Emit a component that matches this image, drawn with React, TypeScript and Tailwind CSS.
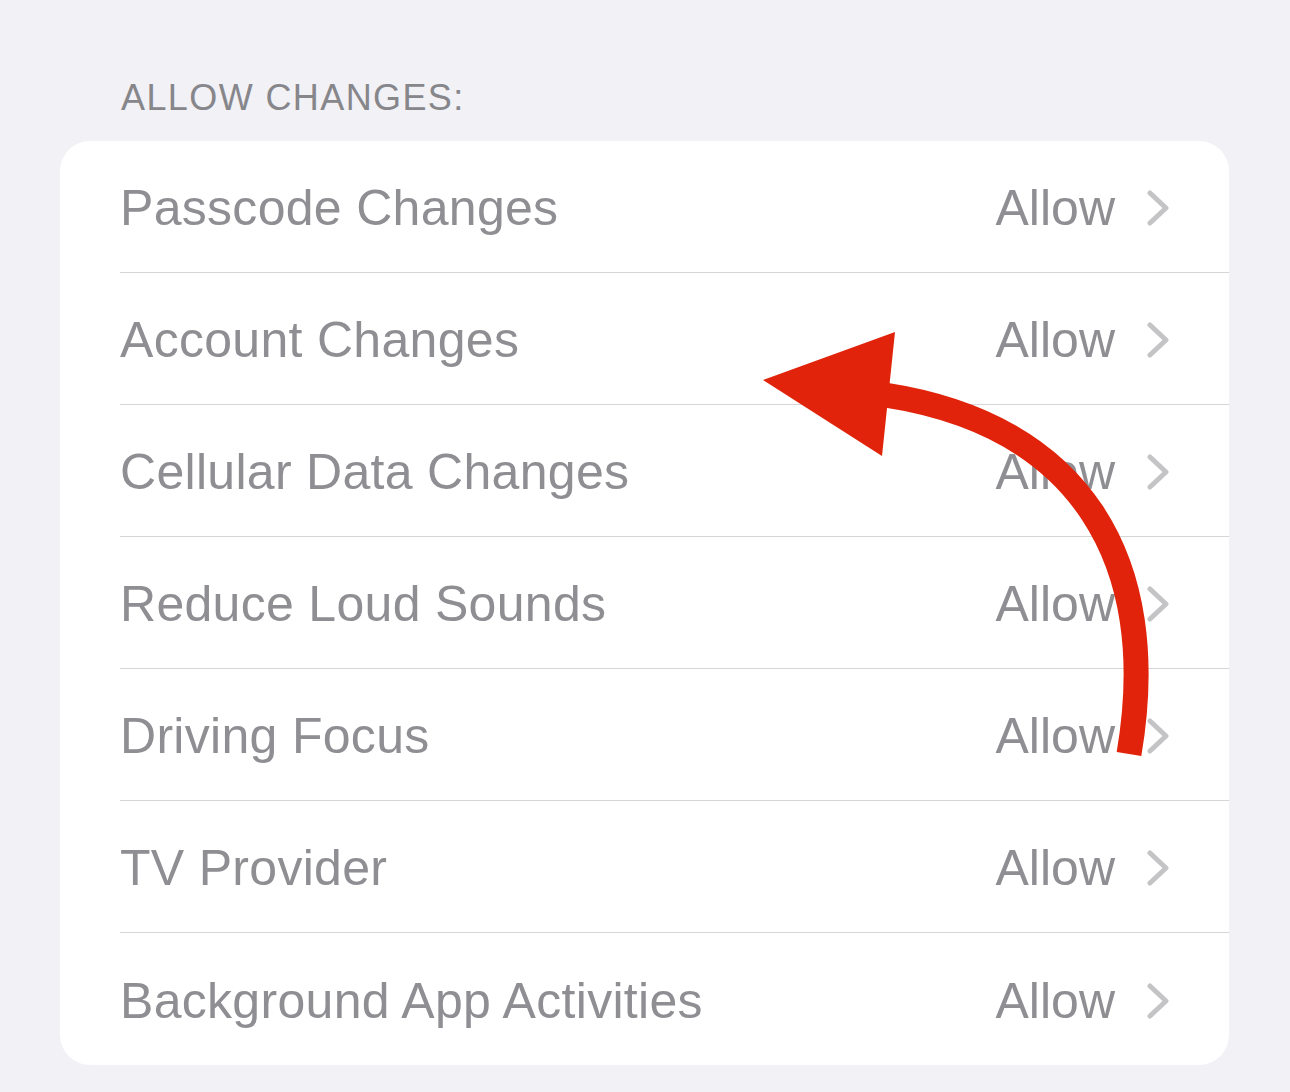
// Restrictions list: "Allow Changes" section with a callout arrow drawn on top
const rows = [
  'Passcode Changes',
  'Account Changes',
  'Cellular Data Changes',
  'Reduce Loud Sounds',
  'Driving Focus',
  'TV Provider',
  'Background App Activities',
];

function Chevron() {
  return (
    <svg width="22" height="36" viewBox="0 0 22 36" className="shrink-0">
      <path d="M3 3 L19 18 L3 33" fill="none" stroke="#c4c4c7" strokeWidth="5" strokeLinecap="round" strokeLinejoin="round" />
    </svg>
  );
}

function CalloutArrow() {
  return (
    <svg width="1290" height="1092" viewBox="0 0 1290 1092" className="absolute left-0 top-0 pointer-events-none">
      <path d="M1129 754 C1162 560 1080 425 885 395" fill="none" stroke="#e0230a" strokeWidth="25" />
      <polygon points="763,380 895,332 882,456" fill="#e0230a" />
    </svg>
  );
}

export default function App() {
  return (
    <div className="relative min-h-[1092px] w-[1290px] bg-[#f1f1f6] font-['Liberation_Sans',Arial,sans-serif]">
      <div className="pl-[121px] pt-[80px] text-[36px] leading-[36px] tracking-[1.4px] text-[#86868b]">
        ALLOW CHANGES:
      </div>

      <div className="ml-[60px] mt-[25px] w-[1169px] overflow-hidden rounded-[30px] bg-white">
        {rows.map((label, idx) => (
          <div key={label} className="flex h-[132px] pl-[60px]">
            <div
              className={`flex flex-1 items-center justify-between pr-[60px] pt-[3px] ${
                idx < rows.length - 1 ? 'border-b-[1.5px] border-[#d6d6da]' : ''
              }`}
            >
              <span className="text-[50px] leading-[50px] tracking-[0.3px] text-[#8e8e93]">{label}</span>
              <div className="flex items-center gap-[32px]">
                <span className="text-[50px] leading-[50px] text-[#8e8e93]">Allow</span>
                <Chevron />
              </div>
            </div>
          </div>
        ))}
      </div>

      <CalloutArrow />
    </div>
  );
}
